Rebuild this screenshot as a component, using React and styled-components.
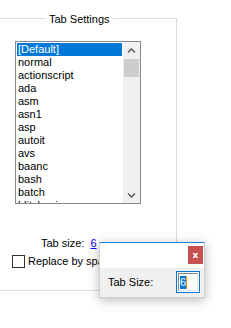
import React from 'react';
import styled, { createGlobalStyle } from 'styled-components';

const GlobalStyle = createGlobalStyle`
    body {
        margin: 0;
        background: #ffffff;
        font-family: "Liberation Sans", Arial, sans-serif;
        font-size: 11px;
        color: #000;
        overflow: hidden;
    }
`;

const Page = styled.div`
    position: relative;
    width: 231px;
    height: 328px;
    overflow: hidden;
    background: #fff;
`;

const Group = styled.div`
    box-sizing: border-box;
    margin: 18px 0 0 -10px;
    width: 187px;
    height: 273px;
    border: 1px solid #dcdcdc;
    padding: 0 0 0 24px;
`;

const Legend = styled.div`
    display: table;
    margin: -7px 0 0 31px;
    padding: 0 3px;
    background: #fff;
    line-height: 14px;
`;

const List = styled.div`
    box-sizing: border-box;
    display: flex;
    margin-top: 15px;
    width: 126px;
    height: 163px;
    border: 1px solid #828790;
    background: #fff;
`;

const Items = styled.div`
    flex: 1;
    padding: 1px;
    overflow: hidden;
`;

const Row = styled.div`
    height: 13px;
    line-height: 13px;
    padding-left: 1px;
    white-space: nowrap;
    background: ${({selected}) => selected ? '#0078d7' : 'transparent'};
    color: ${({selected}) => selected ? '#fff' : '#000'};
`;

const Scrollbar = styled.div`
    width: 17px;
    display: flex;
    flex-direction: column;
    background: #f0f0f0;
`;

const Arrow = styled.div`
    height: 17px;
    display: flex;
    align-items: center;
    justify-content: center;
`;

const Track = styled.div`
    flex: 1;
    padding: 0 1px;
`;

const Thumb = styled.div`
    height: 18px;
    background: #cdcdcd;
`;

const SizeRow = styled.div`
    display: flex;
    gap: 6px;
    margin: 32px 0 0 26px;
    line-height: 14px;
`;

const Link = styled.span`
    color: #0000ff;
    text-decoration: underline;
`;

const CheckRow = styled.div`
    display: flex;
    align-items: center;
    gap: 3px;
    margin: 5px 0 0 -3px;
    line-height: 13px;
    white-space: nowrap;
`;

const Box = styled.div`
    box-sizing: border-box;
    width: 13px;
    height: 13px;
    border: 1px solid #333;
    background: #fff;
`;

const Dialog = styled.div`
    position: absolute;
    left: 99px;
    top: 242px;
    box-sizing: border-box;
    width: 106px;
    height: 56px;
    display: flex;
    flex-direction: column;
    border: 1px solid rgba(0, 0, 0, 0.18);
    border-top-color: #1883d7;
    background: #fff;
    box-shadow: 0 2px 10px rgba(0, 0, 0, 0.28);
`;

const TitleBar = styled.div`
    height: 25px;
    display: flex;
    justify-content: flex-end;
    padding: 3px 1px 0 0;
    box-sizing: border-box;
`;

const Close = styled.div`
    width: 15px;
    height: 18px;
    background: #c75050;
    color: #fff;
    font-family: "DejaVu Sans", sans-serif;
    font-size: 9px;
    font-weight: bold;
    display: flex;
    align-items: center;
    justify-content: center;
`;

const Body = styled.div`
    flex: 1;
    background: #f0f0f0;
    display: flex;
    align-items: flex-start;
    justify-content: space-between;
    padding: 3px 4px 0 8px;
`;

const Label = styled.span`
    line-height: 22px;
`;

const Field = styled.div`
    box-sizing: border-box;
    width: 24px;
    height: 22px;
    border: 1px solid #0078d7;
    padding: 1px;
    background: #fff;
`;

const Inner = styled.div`
    box-sizing: border-box;
    height: 100%;
    border-top: 1px solid #8a8a8a;
    border-left: 1px solid #8a8a8a;
    border-right: 1px solid #e3e3e3;
    border-bottom: 1px solid #e3e3e3;
    padding: 2px 0 0 1px;
    display: flex;
    align-items: flex-start;
`;

const Sel = styled.span`
    background: #0078d7;
    color: #fff;
    line-height: 13px;
    padding: 0 0;
`;

const Caret = styled.span`
    width: 1px;
    height: 13px;
    background: #ff8800;
`;

const Chevron = ({down}) => (
    <svg width="9" height="6" viewBox="0 0 9 6">
        <path d={down ? 'M1 1.5 L4.5 5 L8 1.5' : 'M1 4.5 L4.5 1 L8 4.5'} fill="none" stroke="#606060" strokeWidth="1.6"/>
    </svg>
);

const names = ['[Default]', 'normal', 'actionscript', 'ada', 'asm', 'asn1', 'asp', 'autoit', 'avs', 'baanc', 'bash', 'batch', 'blitzbasic'];

const App = () => (
    <Page>
        <GlobalStyle />
        <Group>
            <Legend>Tab Settings</Legend>
            <List>
                <Items>
                    {names.map((n, i) => <Row key={n} selected={i === 0}>{n}</Row>)}
                </Items>
                <Scrollbar>
                    <Arrow><Chevron /></Arrow>
                    <Track><Thumb /></Track>
                    <Arrow><Chevron down /></Arrow>
                </Scrollbar>
            </List>
            <SizeRow>
                <span>Tab size:</span>
                <Link>6</Link>
            </SizeRow>
            <CheckRow>
                <Box />
                <span>Replace by space</span>
            </CheckRow>
        </Group>
        <Dialog>
            <TitleBar>
                <Close>x</Close>
            </TitleBar>
            <Body>
                <Label>Tab Size:</Label>
                <Field>
                    <Inner>
                        <Sel>6</Sel>
                        <Caret />
                    </Inner>
                </Field>
            </Body>
        </Dialog>
    </Page>
);

export default App;
